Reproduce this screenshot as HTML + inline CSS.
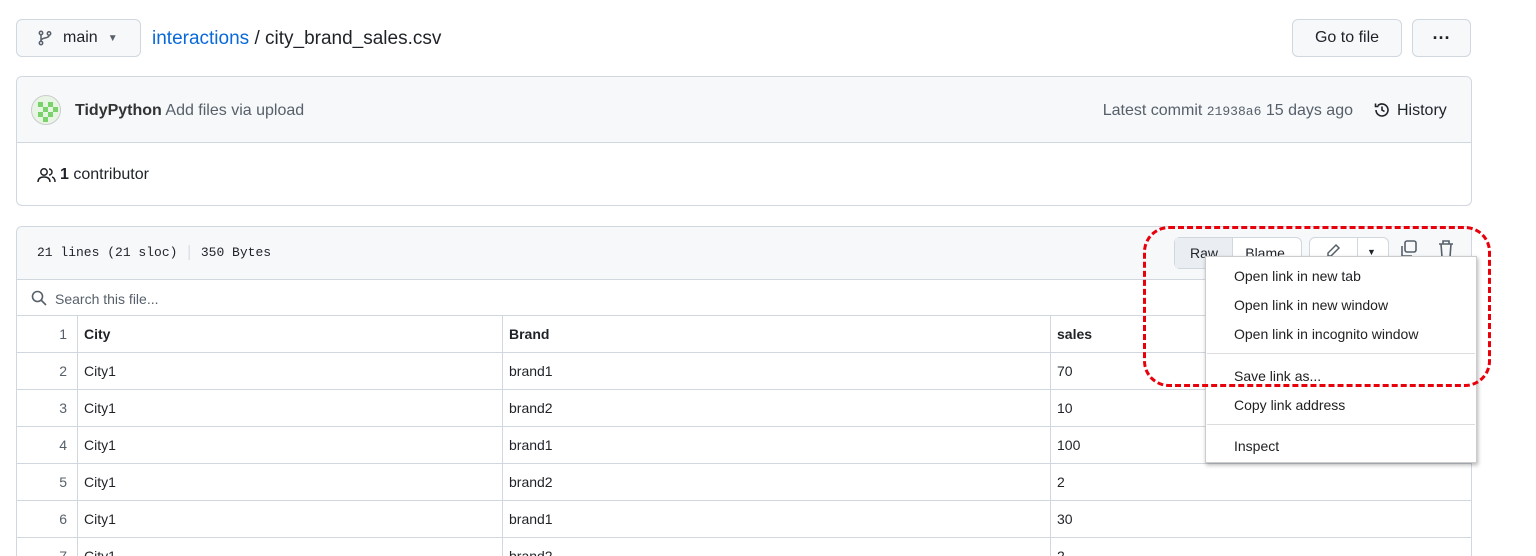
<!DOCTYPE html>
<html><head><style>
*{box-sizing:border-box;margin:0;padding:0}
html,body{width:1536px;height:556px;overflow:hidden}
body{background:#fff;font-family:"Liberation Sans",sans-serif;color:#1f2328;position:relative}
.abs{position:absolute}
.btn{position:absolute;border:1px solid #d0d7de;border-radius:6px;background:#f6f8fa;font-size:16px;display:flex;align-items:center;justify-content:center}
.box{position:absolute;border:1px solid #d0d7de;border-radius:6px;overflow:hidden}
.mono{font-family:"Liberation Mono",monospace}
table{border-collapse:collapse;position:absolute;left:16px;top:315px;font-size:14px}
td{height:37px;border:1px solid #d0d7de;padding-left:6px}
td.n{width:61px;text-align:right;padding-right:10px;color:#57606a}
.menu{position:absolute;left:1205px;top:256px;width:272px;height:207px;background:#fff;border:1px solid #ccc;box-shadow:1px 2px 4px rgba(0,0,0,.3);font-size:14px;color:#202124}
.menu div.i{position:absolute;left:28px}
.menu hr{position:absolute;left:1px;right:1px;border:none;border-top:1px solid #ddd}
</style></head><body>
<div class="btn" style="left:16px;top:19px;width:125px;height:38px;justify-content:flex-start;padding-left:20px;gap:10px">
<svg width="16" height="16" viewBox="0 0 16 16" fill="none" stroke="#57606a" stroke-width="1.5"><circle cx="4" cy="3" r="1.7"/><circle cx="4" cy="13" r="1.7"/><circle cx="12" cy="3.5" r="1.7"/><path d="M4 5v6M12 5.5c0 3-8 2-8 5"/></svg>
<span style="font-size:16px">main</span><span style="font-size:10px;color:#57606a">▼</span></div>
<div class="abs" style="left:152px;top:28px;font-size:19px"><span style="color:#0969da">interactions</span> / city_brand_sales.csv</div>
<div class="btn" style="left:1292px;top:19px;width:110px;height:38px">Go to file</div>
<div class="btn" style="left:1412px;top:19px;width:59px;height:38px;font-size:18px;font-weight:bold">···</div>

<div class="box" style="left:16px;top:76px;width:1456px;height:130px">
<div style="height:66px;background:#f6f8fa;border-bottom:1px solid #d0d7de;position:relative">
<div class="abs" style="left:14px;top:18px;width:30px;height:30px;border-radius:50%;background:#e8f5e4;border:1px solid #ccc;overflow:hidden">
<svg width="30" height="30"><g fill="#7ad36a"><rect x="6" y="6" width="5" height="5"/><rect x="16" y="6" width="5" height="5"/><rect x="11" y="11" width="5" height="5"/><rect x="21" y="11" width="5" height="5"/><rect x="6" y="16" width="5" height="5"/><rect x="16" y="16" width="5" height="5"/><rect x="11" y="21" width="5" height="5"/></g></svg></div>
<div class="abs" style="left:58px;top:25px;font-size:16px"><span style="font-weight:bold;color:#333">TidyPython</span> <span style="color:#57606a">Add files via upload</span></div>
<div class="abs" style="right:118px;top:25px;font-size:16px;color:#57606a">Latest commit <span class="mono" style="font-size:13px">21938a6</span> 15 days ago</div>
<svg class="abs" style="left:1356px;top:24px" width="18" height="18" viewBox="0 0 18 18" fill="none" stroke="#1f2328" stroke-width="1.6"><path d="M3 9a6 6 0 1 0 1.8-4.3"/><path d="M2.5 2.5v3h3"/><path d="M9 5.5V9l2.5 1.5"/></svg>
<div class="abs" style="left:1380px;top:25px;font-size:16px">History</div>
</div>
<svg class="abs" style="left:20px;top:90px" width="20" height="16" viewBox="0 0 20 16" fill="none" stroke="#1f2328" stroke-width="1.5"><circle cx="7" cy="5" r="3.2"/><path d="M1 15c0-3.5 2.5-5 6-5s6 1.5 6 5"/><path d="M12 2a3 3 0 0 1 0 6M15 10c2 .5 3 2 3 5"/></svg>
<div class="abs" style="left:43px;top:89px;font-size:16px"><b>1</b> contributor</div>
</div>

<div class="box" style="left:16px;top:226px;width:1456px;height:340px">
<div style="height:53px;background:#f6f8fa;border-bottom:1px solid #d0d7de;position:relative">
<div class="abs mono" style="left:20px;top:18px;font-size:13px">21 lines (21 sloc) <span style="color:#d0d7de">│</span> 350 Bytes</div>
<div class="btn" style="left:1157px;top:10px;width:128px;height:32px;font-size:14px;justify-content:flex-start;padding-left:15px;background:#fff"><span style="background:#eaeef2;position:absolute;left:0;top:0;bottom:0;width:58px;border-right:1px solid #d0d7de"></span><span style="position:relative">Raw &nbsp; &nbsp; &nbsp; Blame</span></div>
<div class="btn" style="left:1292px;top:10px;width:80px;height:32px;background:#fff"></div>
<svg class="abs" style="left:1308px;top:16px" width="16" height="16" viewBox="0 0 16 16" fill="none" stroke="#57606a" stroke-width="1.5"><path d="M11 2l3 3-8 8H3v-3z"/></svg>
<div class="abs" style="left:1340px;top:10px;width:1px;height:32px;background:#d0d7de"></div>
<div class="abs" style="left:1350px;top:20px;font-size:9px">▼</div>
<svg class="abs" style="left:1381px;top:12px" width="22" height="20" viewBox="0 0 22 20" fill="none" stroke="#57606a" stroke-width="1.6"><rect x="7" y="2" width="11" height="11" rx="2"/><path d="M4 7v10h10"/></svg>
<svg class="abs" style="left:1420px;top:12px" width="18" height="20" viewBox="0 0 18 20" fill="none" stroke="#57606a" stroke-width="1.6"><path d="M2 5h14M6 5V2h6v3M4 5l1 13h8l1-13"/></svg>
</div>
<svg class="abs" style="left:14px;top:63px" width="16" height="16" viewBox="0 0 16 16" fill="none" stroke="#57606a" stroke-width="1.6"><circle cx="6.5" cy="6.5" r="5"/><path d="M10 10l5 5"/></svg>
<div class="abs" style="left:38px;top:64px;font-size:14px;color:#57606a">Search this file...</div>
</div>
<table>
<tr style="font-weight:bold;background:#fff"><td class="n" style="font-weight:normal">1</td><td style="width:425px">City</td><td style="width:548px">Brand</td><td style="width:421px">sales</td></tr>
<tr><td class="n">2</td><td>City1</td><td>brand1</td><td>70</td></tr>
<tr><td class="n">3</td><td>City1</td><td>brand2</td><td>10</td></tr>
<tr><td class="n">4</td><td>City1</td><td>brand1</td><td>100</td></tr>
<tr><td class="n">5</td><td>City1</td><td>brand2</td><td>2</td></tr>
<tr><td class="n">6</td><td>City1</td><td>brand1</td><td>30</td></tr>
<tr><td class="n">7</td><td>City1</td><td>brand2</td><td>2</td></tr>
</table>

<div class="menu">
<div class="i" style="top:11px">Open link in new tab</div>
<div class="i" style="top:40px">Open link in new window</div>
<div class="i" style="top:69px">Open link in incognito window</div>
<hr style="top:96px">
<div class="i" style="top:111px">Save link as...</div>
<div class="i" style="top:140px">Copy link address</div>
<hr style="top:167px">
<div class="i" style="top:181px">Inspect</div>
</div>
<div class="abs" style="left:1143px;top:226px;width:348px;height:161px;border:3px dashed #e8000b;border-radius:26px"></div>
</body></html>
